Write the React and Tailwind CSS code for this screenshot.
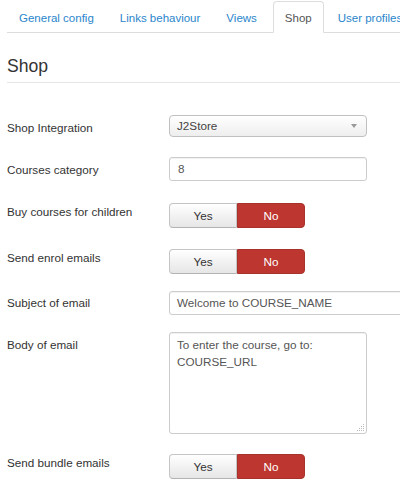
import React from "react";

const tabs = ["General config", "Links behaviour", "Views", "Shop", "User profiles"];

function Toggle() {
  return (
    <div className="flex h-[25px] text-[11.7px]">
      <div className="flex w-[68px] items-center justify-center rounded-l-[4px] border border-[#c5c5c5] border-b-[#b3b3b3] bg-gradient-to-b from-white to-[#e6e6e6] text-[#333]">
        Yes
      </div>
      <div className="flex w-[68px] items-center justify-center rounded-r-[4px] border border-[#a8322c] bg-[#bd362f] text-white">
        No
      </div>
    </div>
  );
}

function Row({ label, pt, mt, children }) {
  return (
    <div className="flex items-start" style={{ marginTop: mt }}>
      <div className="w-[162px] shrink-0 leading-[18px] text-[#333]" style={{ paddingTop: pt }}>
        {label}
      </div>
      {children}
    </div>
  );
}

export default function App() {
  return (
    <div className="h-[493px] w-[400px] overflow-hidden bg-white pl-[7px] text-[11.7px] font-['Liberation_Sans',Arial,sans-serif]">
      <div className="flex h-[33px] items-end border-b border-[#ddd]">
        {tabs.map((tab) => (
          <div
            key={tab}
            className={`mr-[2px] mb-[-1px] flex h-[32px] shrink-0 items-center whitespace-nowrap rounded-t-[4px] border px-[11px] pt-[3px] text-[11.5px] ${
              tab === "Shop" ? "ml-[2px] border-[#ddd] border-b-white bg-white text-[#555]" : "border-transparent text-[#2a86cc]"
            }`}
          >
            {tab}
          </div>
        ))}
      </div>

      <h2 className="mt-[23px] text-[17.6px] leading-[20px] text-[#333]">Shop</h2>
      <div className="mt-[6px] h-px bg-[#e5e5e5]" />

      <Row label="Shop Integration" pt={4} mt={32}>
        <div className="relative flex h-[22px] w-[198px] items-center rounded-[4px] border border-[#c0c0c0] bg-gradient-to-b from-white to-[#eeeeee] pl-[7px] text-[#444] shadow-[inset_0_1px_0_rgba(255,255,255,0.8)]">
          J2Store
          <span className="absolute right-[9px] top-[8px] h-0 w-0 border-x-[3.5px] border-t-[4px] border-x-transparent border-t-[#999]" />
        </div>
      </Row>

      <Row label="Courses category" pt={3.5} mt={20}>
        <div className="flex h-[24px] w-[198px] items-center rounded-[3px] border border-[#ccc] pl-[8px] text-[#555] shadow-[inset_0_1px_1px_rgba(0,0,0,0.06)]">
          8
        </div>
      </Row>

      <Row label="Buy courses for children" pt={0} mt={22}>
        <Toggle />
      </Row>

      <Row label="Send enrol emails" pt={0} mt={21}>
        <Toggle />
      </Row>

      <Row label="Subject of email" pt={2.5} mt={17}>
        <div className="flex h-[24px] w-[260px] shrink-0 items-center rounded-[3px] border border-[#ccc] pl-[7px] text-[#555] shadow-[inset_0_1px_1px_rgba(0,0,0,0.06)]">
          Welcome to COURSE_NAME
        </div>
      </Row>

      <Row label="Body of email" pt={3.5} mt={17}>
        <div className="relative h-[102px] w-[198px] rounded-[3px] border border-[#ccc] px-[7px] pt-[4px] leading-[16.5px] text-[#555] shadow-[inset_0_1px_1px_rgba(0,0,0,0.06)]">
          <div>To enter the course, go to:</div>
          <div>COURSE_URL</div>
          <svg className="absolute bottom-[1px] right-[1px]" width="9" height="9" viewBox="0 0 9 9">
            <g fill="#bbb">
              <rect x="7" y="1" width="1" height="1" />
              <rect x="5" y="3" width="1" height="1" />
              <rect x="7" y="3" width="1" height="1" />
              <rect x="3" y="5" width="1" height="1" />
              <rect x="5" y="5" width="1" height="1" />
              <rect x="7" y="5" width="1" height="1" />
              <rect x="1" y="7" width="1" height="1" />
              <rect x="3" y="7" width="1" height="1" />
              <rect x="5" y="7" width="1" height="1" />
              <rect x="7" y="7" width="1" height="1" />
            </g>
          </svg>
        </div>
      </Row>

      <Row label="Send bundle emails" pt={0} mt={20}>
        <Toggle />
      </Row>
    </div>
  );
}
